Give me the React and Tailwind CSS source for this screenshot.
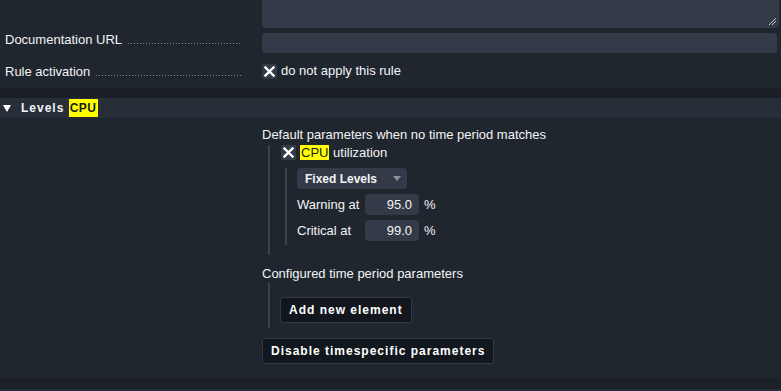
function Check() {
  return (
    <span className="inline-flex h-[15px] w-[15px] shrink-0 items-center justify-center rounded-[2px] bg-[#323b47]">
      <svg width="11" height="11" viewBox="0 0 11 11">
        <path d="M1.5 1.5 L9.5 9.5 M9.5 1.5 L1.5 9.5" stroke="#ffffff" strokeWidth="2.4" strokeLinecap="square" />
      </svg>
    </span>
  );
}

// label with dotted leader up to the value column
function Label({ text, className = "" }) {
  return (
    <div className={"flex h-[15px] w-[262px] items-end pl-[5px] pr-[20px] leading-[15px] " + className}>
      <span className="whitespace-nowrap">{text}</span>
      <span className="mb-[3px] ml-[6px] h-[1px] flex-1 bg-[linear-gradient(to_right,#7d848d_1px,transparent_1px)] bg-[length:3px_1px]"></span>
    </div>
  );
}

function Cpu() {
  return <span className="bg-[#ffff00] px-[1px] text-[#1a1a1a]">CPU</span>;
}

export default function App() {
  return (
    <div
      className="h-[391px] w-[781px] overflow-hidden bg-[#20262e] text-[13px] text-[#f2f4f7]"
      style={{ fontFamily: '"Liberation Sans", Arial, sans-serif' }}
    >
      {/* top rule section */}
      <div className="h-[88px]">
        <div className="flex">
          <div className="w-[262px]"></div>
          <div className="relative mr-[2px] h-[28px] flex-1 rounded-b-[4px] bg-[#323b47]">
            <svg className="absolute right-[2px] bottom-[2px]" width="9" height="9" viewBox="0 0 9 9">
              <path d="M8 1 L1 8 M8 4 L4 8" stroke="#c0c4ca" strokeWidth="1" />
            </svg>
          </div>
        </div>
        <div className="mt-[5px] flex h-[20px] items-start">
          <Label text="Documentation URL" className="-mt-[1px]" />
          <div className="mr-[4px] h-[20px] flex-1 rounded-[4px] bg-[#323b47]"></div>
        </div>
        <div className="mt-[10px] flex h-[16px] items-center">
          <Label text="Rule activation" />
          <div className="flex items-center gap-[4px]">
            <Check />
            <span>do not apply this rule</span>
          </div>
        </div>
      </div>

      <div className="h-[10px] bg-[#1b1f26]"></div>

      {/* section header */}
      <div className="flex h-[20px] items-center bg-[#272e38] pl-[3px] text-[12px] font-bold tracking-[1px]">
        <svg width="8" height="7" viewBox="0 0 8 7" className="mr-[10px] mt-[1px]">
          <path d="M0 0 H8 L4 7 Z" fill="#ffffff" />
        </svg>
        <span>Levels&nbsp;</span>
        <span className="bg-[#ffff00] px-[1px] tracking-[0.5px] text-[#1a1a1a]">CPU</span>
      </div>

      {/* section body */}
      <div className="h-[260px] pl-[262px] pt-[9px]">
        <div className="leading-[16px]">Default parameters when no time period matches</div>
        <div className="ml-[6px] mt-[2px] border-l-2 border-[#3a424d] pl-[11px] pb-[10px]">
          <div className="flex h-[15px] items-center gap-[4px]">
            <Check />
            <span>
              <Cpu /> utilization
            </span>
          </div>
          <div className="ml-[4px] mt-[8px] border-l-2 border-[#3a424d] pl-[10px] pb-[4px]">
            <div className="flex h-[21px] w-[110px] items-center justify-between rounded-[4px] bg-[#323b47] pl-[8px] pr-[6px] text-[12px] font-bold">
              <span>Fixed Levels</span>
              <svg width="8" height="5" viewBox="0 0 8 5">
                <path d="M0 0 H8 L4 5 Z" fill="#8b929b" />
              </svg>
            </div>
            <div className="mt-[5px] flex h-[21px] items-center">
              <span className="w-[68px]">Warning at</span>
              <span className="flex h-[21px] w-[54px] items-center justify-end rounded-[4px] bg-[#323b47] pr-[7px]">95.0</span>
              <span className="ml-[5px]">%</span>
            </div>
            <div className="mt-[5px] flex h-[21px] items-center">
              <span className="w-[68px]">Critical at</span>
              <span className="flex h-[21px] w-[54px] items-center justify-end rounded-[4px] bg-[#323b47] pr-[7px]">99.0</span>
              <span className="ml-[5px]">%</span>
            </div>
          </div>
        </div>
        <div className="mt-[11px] leading-[16px]">Configured time period parameters</div>
        <div className="ml-[6px] mt-[1px] border-l-2 border-[#3a424d] pl-[10px] pt-[14px] pb-[5px]">
          <button className="h-[26px] rounded-[3px] border border-[#323944] bg-[#12171d] px-[8px] text-[12px] font-bold tracking-[1px] text-white">
            Add new element
          </button>
        </div>
        <button className="mt-[10px] h-[26px] rounded-[3px] border border-[#323944] bg-[#12171d] px-[8px] text-[12px] font-bold tracking-[1px] text-white">
          Disable timespecific parameters
        </button>
      </div>

      <div className="h-[11px] bg-[#1b1f26]"></div>
      <div className="h-[20px] bg-[#272e38]"></div>
    </div>
  );
}
